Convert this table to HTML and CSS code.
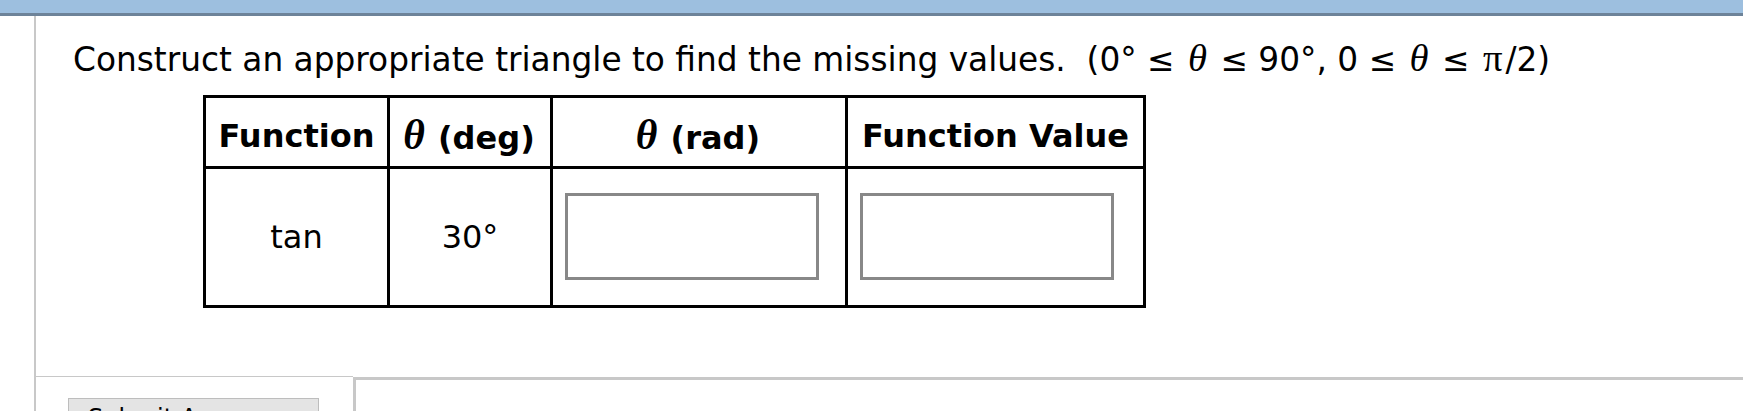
FILE: index.html
```html
<!DOCTYPE html>
<html lang="en">
<head>
<meta charset="utf-8">
<title>Triangle values</title>
<link rel="stylesheet" href="styles.css">
</head>
<body>
<div class="topbar"></div>
<div class="frame">
  <div class="question">
    <p class="prompt">Construct an appropriate triangle to find the missing values.&nbsp; (0° ≤ <i class="m">θ</i> ≤ 90°, 0 ≤ <i class="m">θ</i> ≤ <span class="pi">π</span>/2)</p>
    <table class="tri">
      <colgroup><col class="c1"><col class="c2"><col class="c3"><col class="c4"></colgroup>
      <thead>
        <tr><th>Function</th><th><i class="m">θ</i> (deg)</th><th><i class="m">θ</i> (rad)</th><th>Function Value</th></tr>
      </thead>
      <tbody>
        <tr><td>tan</td><td>30°</td><td class="in"><input type="text" aria-label="theta rad"></td><td class="in"><input type="text" aria-label="function value"></td></tr>
      </tbody>
    </table>
  </div>
  <div class="footer">
    <div class="actions"><button type="button">Submit Answer</button></div>
    <div class="side"></div>
  </div>
</div>
</body>
</html>
```
FILE: styles.css
```css
html, body { margin: 0; padding: 0; background: #fff; }
body {
  font-family: "DejaVu Sans", Verdana, sans-serif;
  color: #000;
  overflow: hidden;
}
.topbar {
  height: 13px;
  background: #9dbfdf;
  border-bottom: 3px solid #6d8399;
}
.frame {
  margin-left: 34px;
  border-left: 2px solid #c8c8c8;
  min-height: 600px;
}
.question {
  padding: 23px 0 0 37px;
}
.prompt {
  margin: 0;
  font-size: 32.8px;
  line-height: 38px;
  white-space: nowrap;
}
.m {
  font-family: "Liberation Serif", "Times New Roman", serif;
  font-style: italic;
  font-size: 1.18em;
  line-height: 1;
}
.pi {
  font-family: "Liberation Serif", "Times New Roman", serif;
  font-size: 1.18em;
  line-height: 1;
}
.prompt .m, .prompt .pi {
  margin: 0 3px;
}
.tri .m {
  font-size: 1.3em;
  margin: 0 2px 0 -2px;
}
.tri {
  margin: 16px 0 0 130px;
  border-collapse: collapse;
  table-layout: fixed;
  width: 943px;
  border: 3px solid #000;
  font-size: 32px;
}
.c1 { width: 184px; }
.c2 { width: 163px; }
.c3 { width: 295px; }
.c4 { width: 298px; }
.tri th, .tri td {
  border: 3px solid #000;
  padding: 0;
  text-align: center;
  vertical-align: middle;
}
.tri th {
  height: 71px;
  font-weight: bold;
  white-space: nowrap;
  padding-top: 7px;
  box-sizing: border-box;
}
.tri td {
  height: 139px;
  box-sizing: border-box;
}
.tri td.in {
  text-align: left;
  padding-left: 12px;
}
.tri input {
  display: block;
  box-sizing: border-box;
  width: 254px;
  height: 87px;
  border: 3px solid #888;
  margin: -2px 0 0 0;
  padding: 0;
  background: #fff;
  font-size: 28px;
}
.footer {
  display: flex;
  margin-top: 68px;
}
.actions {
  width: 317px;
  border-top: 1px solid #c8c8c8;
  padding: 21px 0 0 32px;
  box-sizing: border-box;
}
.actions button {
  display: block;
  width: 251px;
  height: 40px;
  background: #e4e4e4;
  border: 1px solid #bdbdbd;
  font-family: "DejaVu Sans", Verdana, sans-serif;
  font-size: 24px;
  line-height: 28px;
  text-align: left;
  padding: 0 0 0 19px;
  margin: 0;
  color: #000;
}
.side {
  flex: 1;
  margin-top: 1px;
  border-top: 3px solid #c8c8c8;
  border-left: 3px solid #c8c8c8;
  min-height: 60px;
}
```
